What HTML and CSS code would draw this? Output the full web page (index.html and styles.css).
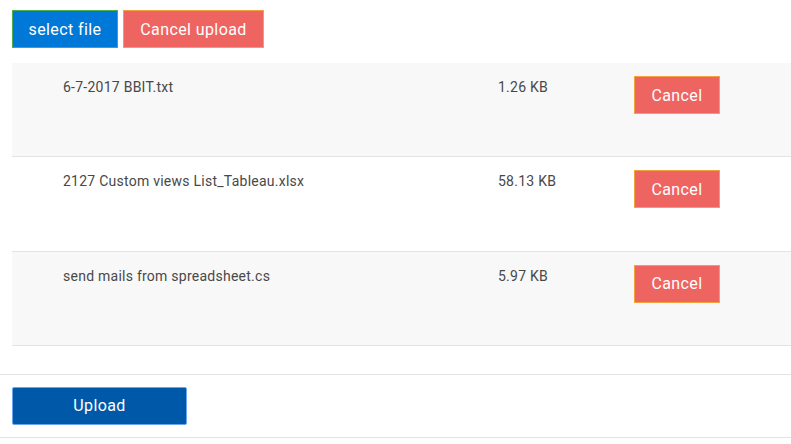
FILE: index.html
```html
<!DOCTYPE html>
<html>
<head>
<meta charset="utf-8">
<link rel="stylesheet" href="styles.css">
</head>
<body>
<div class="uploader">
  <div class="toolbar">
    <button class="btn btn-select">select file</button>
    <button class="btn btn-cancel-all">Cancel upload</button>
  </div>
  <ul class="file-list">
    <li class="file-row">
      <span class="file-name">6-7-2017 BBIT.txt</span>
      <span class="file-size">1.26 KB</span>
      <button class="btn btn-cancel">Cancel</button>
    </li>
    <li class="file-row">
      <span class="file-name">2127 Custom views List_Tableau.xlsx</span>
      <span class="file-size">58.13 KB</span>
      <button class="btn btn-cancel">Cancel</button>
    </li>
    <li class="file-row">
      <span class="file-name">send mails from spreadsheet.cs</span>
      <span class="file-size">5.97 KB</span>
      <button class="btn btn-cancel">Cancel</button>
    </li>
  </ul>
</div>
<div class="footer">
  <button class="btn btn-upload">Upload</button>
</div>
</body>
</html>
```
FILE: styles.css
```css
html, body {
  margin: 0;
  padding: 0;
  background: #ffffff;
  font-family: Roboto, "Liberation Sans", sans-serif;
}
.uploader {
  padding: 10px 0 0 12px;
}
.toolbar {
  display: flex;
  gap: 5px;
  height: 38px;
}
.btn {
  font-family: Roboto, "Liberation Sans", sans-serif;
  font-size: 16px;
  letter-spacing: 0.4px;
  color: #ffffff;
  border: 1px solid transparent;
  padding: 0;
  margin: 0;
  cursor: pointer;
}
.btn-select {
  width: 106px;
  height: 38px;
  background: #0078d7;
  border-color: #4cae4f;
}
.btn-cancel-all {
  width: 141px;
  height: 38px;
  background: #ee6461;
  border-color: #f3a23c;
}
.file-list {
  list-style: none;
  margin: 15px 0 0 0;
  padding: 0;
}
.file-row {
  display: flex;
  align-items: flex-start;
  height: 80.33px;
  padding: 13px 0 0 51px;
  border-bottom: 1px solid #e3e3e3;
  font-size: 14px;
  letter-spacing: 0.25px;
  line-height: 20px;
  color: #484848;
}
.file-row:nth-child(odd) {
  background: #f8f8f8;
}
.file-name {
  width: 435px;
  padding-top: 1px;
}
.file-size {
  width: 136px;
  padding-top: 1px;
}
.btn-cancel {
  width: 86px;
  height: 38px;
  background: #ee6461;
  border-color: #f3a23c;
}
.footer {
  margin-top: 28px;
  border-top: 1px solid #e3e3e3;
  border-bottom: 1px solid #e3e3e3;
  padding: 12px;
}
.btn-upload {
  display: block;
  width: 175px;
  height: 38px;
  background: #0059a8;
  border-color: #6aa5ee;
  border-radius: 2px;
}
```
